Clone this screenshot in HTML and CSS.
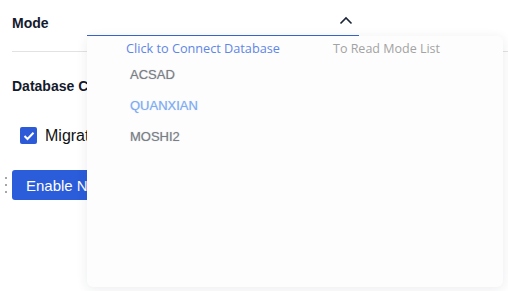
FILE: index.html
```html
<!DOCTYPE html>
<html>
<head>
<meta charset="utf-8">
<link rel="stylesheet" href="styles.css">
</head>
<body>
<div class="form">
  <div class="mode-row">
    <div class="label">Mode</div>
    <div class="select">
      <svg class="chev" width="14" height="9" viewBox="0 0 14 9"><path d="M1.5 7.5 L7 2 L12.5 7.5" fill="none" stroke="#1b2436" stroke-width="1.6"/></svg>
    </div>
  </div>
  <div class="section">Database Connection</div>
  <label class="check-row"><span class="box"><svg width="12" height="10" viewBox="0 0 12 10"><path d="M1.5 5 L4.5 8 L10.5 1.8" fill="none" stroke="#fff" stroke-width="2"/></svg></span><span class="check-text">Migrate existing data</span></label>
  <div class="btn-row">
    <span class="dots"><i></i><i></i><i></i></span>
    <button class="btn">Enable Now</button>
  </div>
</div>
<div class="dropdown">
  <div class="dd-head"><span class="connect">Click to Connect Database</span><span class="hint">To Read Mode List</span></div>
  <div class="dd-item">ACSAD</div>
  <div class="dd-item active">QUANXIAN</div>
  <div class="dd-item">MOSHI2</div>
</div>
</body>
</html>
```
FILE: styles.css
```css
html, body { margin: 0; padding: 0; background: #fff; }
body { font-family: "Liberation Sans", Arial, sans-serif; width: 508px; height: 291px; overflow: hidden; position: relative; }
.form { padding-left: 12px; }
.mode-row { display: flex; height: 51px; border-bottom: 1px solid #e2e2e2; }
.label { width: 75px; font-weight: bold; font-size: 14px; color: #141a2c; padding-top: 15px; }
.select { width: 272px; height: 35px; border-bottom: 1px solid #3a64cc; position: relative; }
.chev { position: absolute; right: 6px; top: 16px; }
.section { font-weight: bold; font-size: 14px; color: #141a2c; margin-top: 26px; height: 16px; }
.check-row { display: flex; align-items: center; margin-top: 33px; margin-left: 8px; height: 17px; }
.box { flex: none; width: 17px; height: 17px; background: #2d5bd8; border-radius: 2px; display: flex; align-items: center; justify-content: center; }
.check-text { margin-left: 8px; font-size: 16px; color: #111; white-space: nowrap; }
.btn-row { display: flex; align-items: center; margin-top: 26px; margin-left: -7px; }
.dots { display: flex; flex-direction: column; gap: 5px; width: 7px; }
.dots i { display: block; width: 2px; height: 2px; border-radius: 1px; background: #888; }
.btn { margin: 0; border: 0; height: 30px; padding: 0 14px; background: #2b5cd9; color: #fff; border-radius: 3px; font-family: "Liberation Sans", Arial, sans-serif; font-size: 15px; }
.dropdown { position: absolute; left: 87px; top: 36px; width: 416px; height: 251px; background: #fdfdfd; border-radius: 6px; box-shadow: 0 2px 12px rgba(30, 40, 80, 0.09); font-family: "Open Sans", sans-serif; }
.dd-head { display: flex; padding-left: 39px; height: 22px; align-items: center; font-size: 12.7px; margin-top: 1px; }
.connect { color: #5f86e6; width: 207px; }
.hint { color: #a3a3a3; font-size: 12.5px; }
.dd-item { font-family: "Liberation Sans", Arial, sans-serif; font-size: 13px; color: #7a7e86; padding-left: 43px; height: 31px; line-height: 31px; text-shadow: 0 0 1px rgba(110,115,125,0.5); }
.dd-item.active { color: #7eabf2; text-shadow: 0 0 1px rgba(120,168,242,0.5); }
```
